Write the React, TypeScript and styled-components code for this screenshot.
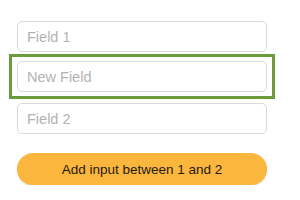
import styled, { createGlobalStyle } from "styled-components";

const GlobalStyle = createGlobalStyle`
  html, body {
    margin: 0;
    padding: 0;
    background: #ffffff;
  }
  body {
    font-family: "Liberation Sans", Arial, sans-serif;
  }
`;

const Form = styled.div`
  display: flex;
  flex-direction: column;
  padding: 21px 0 0 17px;
  width: 250px;
`;

const Input = styled.input`
  box-sizing: border-box;
  width: 250px;
  height: 31px;
  margin: 0;
  padding: 0 9px;
  border: 1px solid #d9d9d9;
  border-radius: 5px;
  background: #fff;
  font-family: "Liberation Sans", Arial, sans-serif;
  font-size: 14.5px;
  color: #333;
  outline: none;

  &::placeholder {
    color: #b3b3b3;
  }
`;

const Highlight = styled.div`
  margin: 2px -8px 4px;
  padding: 4px 5px;
  border: 3px solid #6b9b3c;
`;

const AddButton = styled.button`
  margin-top: 19px;
  width: 250px;
  height: 32px;
  border: none;
  border-radius: 16px;
  background: #fbb63e;
  box-shadow: 0 1px 1px rgba(180, 120, 20, 0.35);
  color: #1f1a10;
  font-family: "Liberation Sans", Arial, sans-serif;
  font-size: 13.5px;
  cursor: pointer;
`;

export default function App() {
  return (
    <>
      <GlobalStyle />
      <Form>
        <Input placeholder="Field 1" />
        <Highlight>
          <Input placeholder="New Field" />
        </Highlight>
        <Input placeholder="Field 2" />
        <AddButton>Add input between 1 and 2</AddButton>
      </Form>
    </>
  );
}
